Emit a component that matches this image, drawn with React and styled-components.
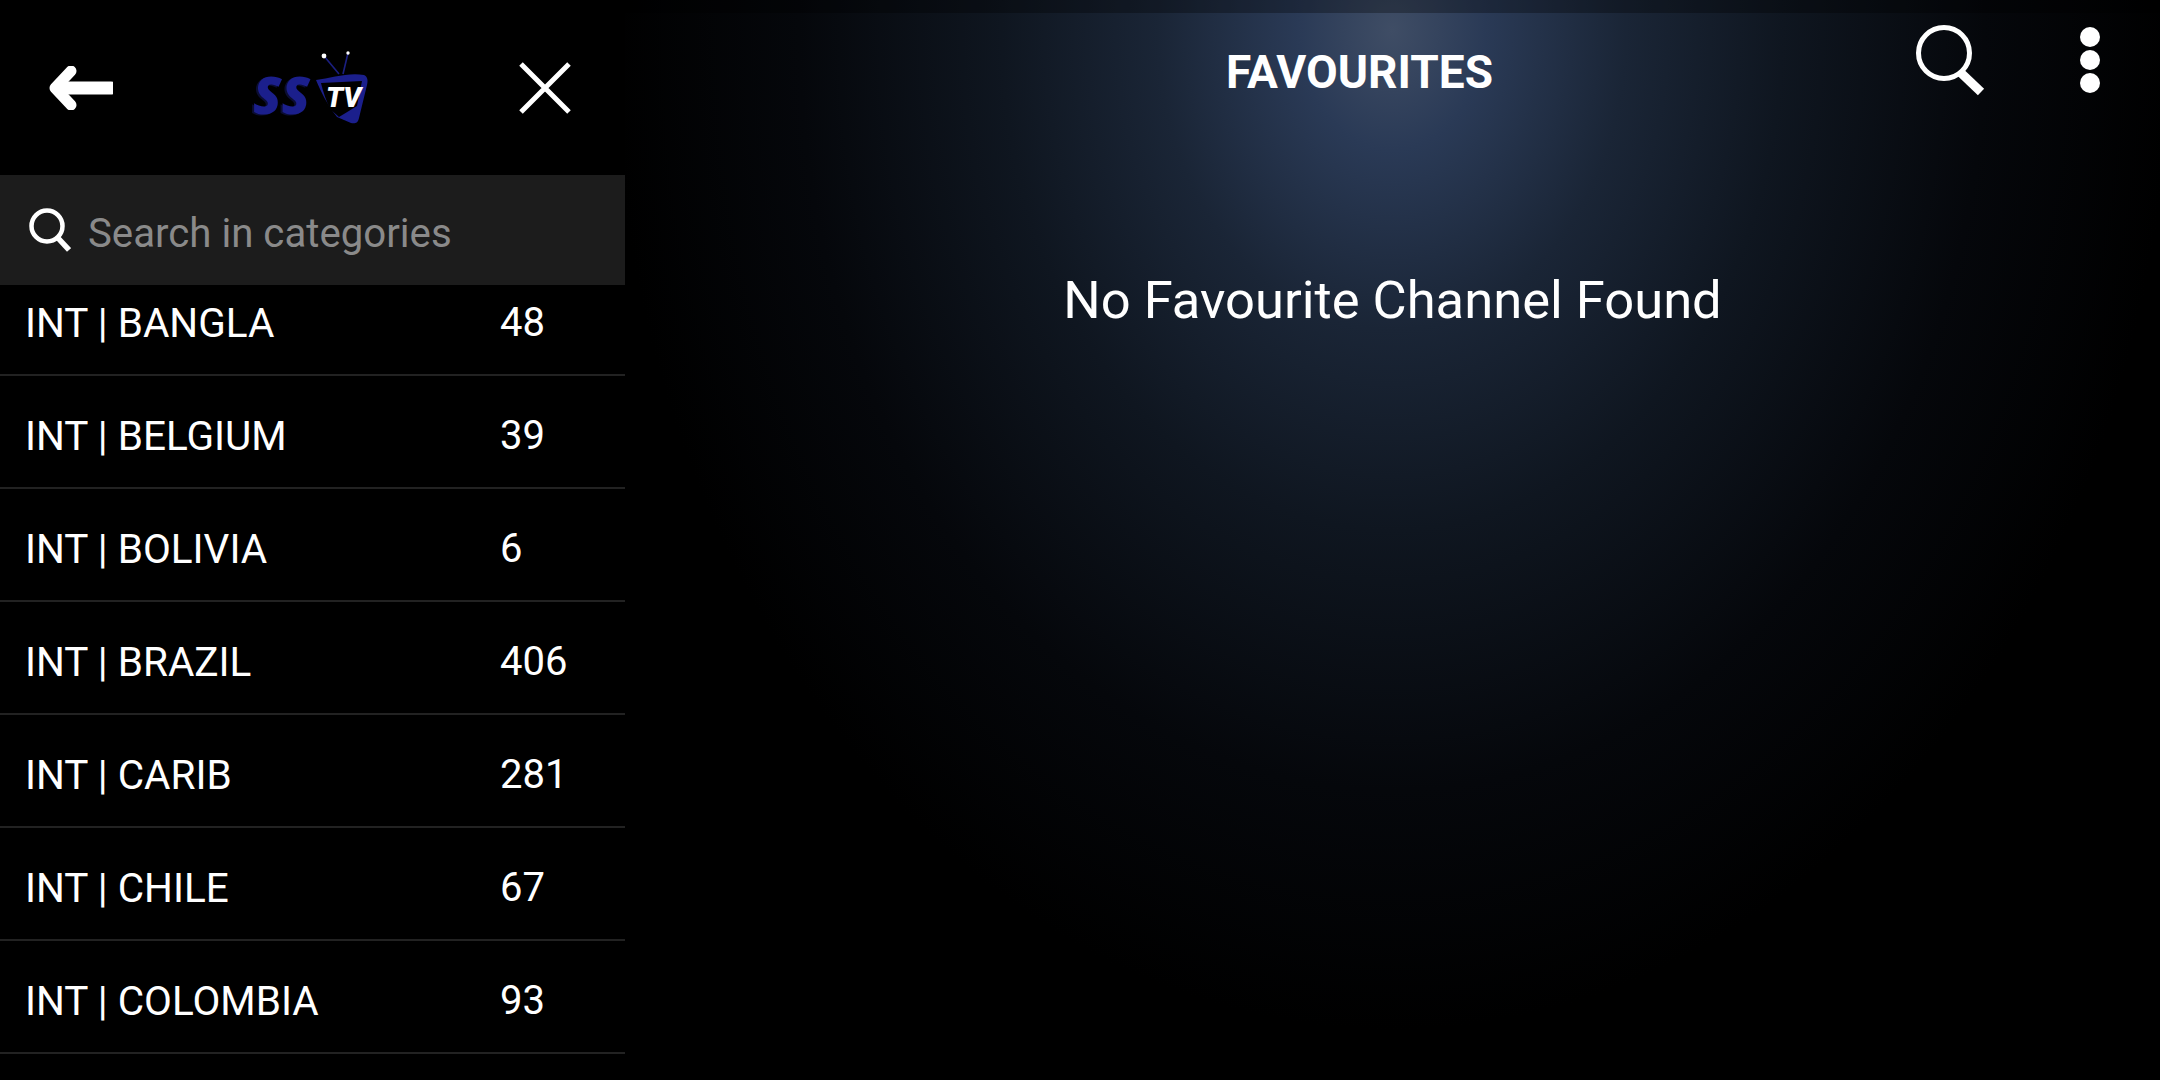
import React from "react";
import styled, { createGlobalStyle } from "styled-components";

const GlobalStyle = createGlobalStyle`
  html, body {
    margin: 0;
    padding: 0;
    background: #000;
  }
  body {
    font-family: Roboto, "Liberation Sans", sans-serif;
    color: #fff;
  }
`;

const categories = [
  { name: "INT | BANGLA", count: 48 },
  { name: "INT | BELGIUM", count: 39 },
  { name: "INT | BOLIVIA", count: 6 },
  { name: "INT | BRAZIL", count: 406 },
  { name: "INT | CARIB", count: 281 },
  { name: "INT | CHILE", count: 67 },
  { name: "INT | COLOMBIA", count: 93 },
];

const Logo = () => (
  <LogoBox width="118" height="75" viewBox="0 0 118 75">
    <path d="M88 24 L73 6 M92 24 L97 3" stroke="#1b1f80" strokeWidth="1.6" />
    <circle cx="73" cy="6" r="2.4" fill="#fff" />
    <circle cx="97" cy="3" r="1.7" fill="#fff" />
    <path
      d="M65 30 C80 28 98 22 113 25 C117 27 117 31 116 35 L108 68 C107 73 104 74 100 73 L86 67 C76 54 70 42 65 30 Z"
      fill="#1b1f8c"
    />
    <path d="M70 33 L111 31 L106 56 L88 67 L79 59 C75 50 72 42 70 33 Z" fill="#000" />
    <TvMark x="75" y="57">TV</TvMark>
    <SsShadow x="0" y="65">SS</SsShadow>
    <SsMark x="2" y="64">SS</SsMark>
  </LogoBox>
);

const App = () => {
  return (
    <Screen>
      <GlobalStyle />
      <Sidebar>
        <TopBar>
          <svg width="64" height="44" viewBox="0 0 64 44">
            <path
              d="M22 5 L6 22 L22 39"
              fill="none"
              stroke="#fff"
              strokeWidth="11"
              strokeLinejoin="round"
              strokeLinecap="round"
            />
            <path d="M10 22 H62" stroke="#fff" strokeWidth="13" strokeLinecap="round" />
          </svg>
          <Logo />
          <svg width="52" height="52" viewBox="0 0 52 52">
            <path d="M2 2 L50 50 M50 2 L2 50" stroke="#fff" strokeWidth="5" />
          </svg>
        </TopBar>
        <SearchBar>
          <svg width="42" height="44" viewBox="0 0 42 44">
            <circle cx="18" cy="18" r="15.5" fill="none" stroke="#fff" strokeWidth="4.5" />
            <path d="M28 29 L40 42" stroke="#fff" strokeWidth="5.5" />
          </svg>
          <Placeholder>Search in categories</Placeholder>
        </SearchBar>
        <ListClip>
          <List>
            {categories.map((item) => (
              <Row key={item.name}>
                <RowName>{item.name}</RowName>
                <RowCount>{item.count}</RowCount>
              </Row>
            ))}
          </List>
        </ListClip>
      </Sidebar>
      <Main>
        <StatusStrip />
        <Header>
          <Title>FAVOURITES</Title>
          <HeaderActions>
            <svg width="70" height="72" viewBox="0 0 70 72">
              <circle cx="29" cy="29" r="25.5" fill="none" stroke="#fff" strokeWidth="5" />
              <path d="M45 48 L66 68" stroke="#fff" strokeWidth="9" />
            </svg>
            <Dots>
              <Dot />
              <Dot />
              <Dot />
            </Dots>
          </HeaderActions>
        </Header>
        <EmptyMessage>No Favourite Channel Found</EmptyMessage>
      </Main>
    </Screen>
  );
};

const Screen = styled.div`
  display: flex;
  width: 2160px;
  height: 1080px;
  overflow: hidden;
  background: #000;
`;

const Sidebar = styled.aside`
  display: flex;
  flex-direction: column;
  flex: none;
  width: 625px;
  height: 100%;
`;

const TopBar = styled.div`
  display: flex;
  align-items: center;
  justify-content: space-between;
  box-sizing: border-box;
  height: 175px;
  padding: 0 54px 0 49px;
`;

const LogoBox = styled.svg`
  margin-right: 13px;
  overflow: visible;
`;

const TvMark = styled.text`
  font-family: Roboto, sans-serif;
  font-size: 28px;
  font-weight: 900;
  font-style: italic;
  fill: #fff;
`;

const SsMark = styled.text`
  font-family: "Open Sans", sans-serif;
  font-size: 52px;
  font-weight: 800;
  font-style: italic;
  fill: #1b1f8c;
`;

const SsShadow = styled(SsMark)`
  fill: #0b0d33;
`;

const SearchBar = styled.div`
  display: flex;
  align-items: center;
  gap: 17px;
  box-sizing: border-box;
  height: 110px;
  padding: 0 0 0 29px;
  background: #1c1c1c;
`;

const Placeholder = styled.span`
  padding-top: 6px;
  font-size: 40.2px;
  color: #8a8a8a;
`;

const ListClip = styled.div`
  flex: 1;
  min-height: 0;
  overflow: hidden;
`;

const List = styled.div`
  margin-top: -22px;
`;

const Row = styled.div`
  display: flex;
  align-items: center;
  box-sizing: border-box;
  height: 113px;
  padding: 8px 0 0 25px;
  border-bottom: 2px solid #222;
`;

const RowName = styled.span`
  width: 475px;
  font-size: 40.5px;
`;

const RowCount = styled.span`
  font-size: 40px;
`;

const Main = styled.main`
  flex: 1;
  height: 100%;
  background: radial-gradient(
    ellipse 780px 1000px at 767px 30px,
    #3f4d65 0%,
    #2a3a56 12%,
    #1a2536 30%,
    #0f1620 50%,
    #05070b 76%,
    #000 100%
  );
`;

const StatusStrip = styled.div`
  height: 13px;
  background: rgba(0, 0, 0, 0.3);
`;

const Header = styled.header`
  display: flex;
  align-items: center;
  height: 117px;
  padding-left: 602px;
`;

const Title = styled.h1`
  margin: 0 0 0 -1px;
  font-size: 46px;
  font-weight: 700;
`;

const HeaderActions = styled.div`
  display: flex;
  align-items: center;
  gap: 95px;
  margin-left: auto;
  padding-right: 60px;
  margin-top: -24px;
`;

const Dots = styled.div`
  display: flex;
  flex-direction: column;
  gap: 3px;
`;

const Dot = styled.span`
  width: 20px;
  height: 20px;
  border-radius: 50%;
  background: #fff;
`;

const EmptyMessage = styled.p`
  margin: 139px 0 0;
  text-align: center;
  font-size: 52.5px;
`;

export default App;
